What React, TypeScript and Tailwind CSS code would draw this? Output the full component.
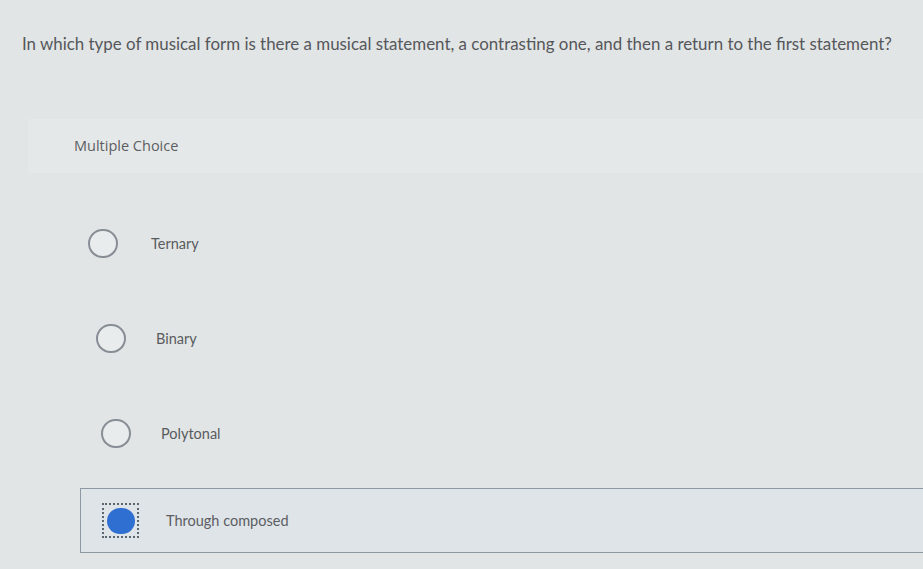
const options = [
  { label: 'Ternary', pad: 'pl-[88px]', gap: 'gap-[33px]', h: 'h-[95px]' },
  { label: 'Binary', pad: 'pl-[96px]', gap: 'gap-[30px]', h: 'h-[95px]' },
  { label: 'Polytonal', pad: 'pl-[101px]', gap: 'gap-[30px]', h: 'h-[95px]' },
];

function Radio() {
  return <span className="block w-[30px] h-[29px] rounded-full border-2 border-[#878e95] bg-[#e9ecec]" />;
}

export default function App() {
  return (
    <div className="w-[923px] h-[569px] overflow-hidden bg-[#e2e5e5] text-[#5a5c60]" style={{ fontFamily: 'Lato, "Open Sans", sans-serif' }}>
      <p className="pl-[22px] pt-[32px] whitespace-nowrap text-[16.9px] leading-[24px] text-[#55575b]">
        In which type of musical form is there a musical statement, a contrasting one, and then a return to the first statement?
      </p>

      <div className="mt-[63px] ml-[28px] h-[54px] flex items-center pl-[46px] bg-[#e5e8e8]">
        <span className="text-[14.5px] text-[#5c5e63]" style={{ fontFamily: '"Open Sans", sans-serif' }}>Multiple Choice</span>
      </div>

      <div className="pt-[56px]">
        {options.map((o) => (
          <div key={o.label} className={`flex items-start ${o.pad} ${o.gap} ${o.h}`}>
            <Radio />
            <span className="text-[14.5px] leading-[29px] text-[#595b60]">{o.label}</span>
          </div>
        ))}
      </div>

      <div className="ml-[80px] -mt-[26px] h-[65px] border-[1.5px] border-r-0 border-[#8d98a2] bg-[#dfe4e8] flex items-center pl-[21px] gap-[27px]">
        <span className="w-[37px] h-[35px] grid place-items-center border-2 border-dotted border-[#5b6570]">
          <span className="block w-[28px] h-[26px] rounded-full bg-[#2f6fd1]" />
        </span>
        <span className="text-[14.5px] text-[#5b5d62]">Through composed</span>
      </div>
    </div>
  );
}
